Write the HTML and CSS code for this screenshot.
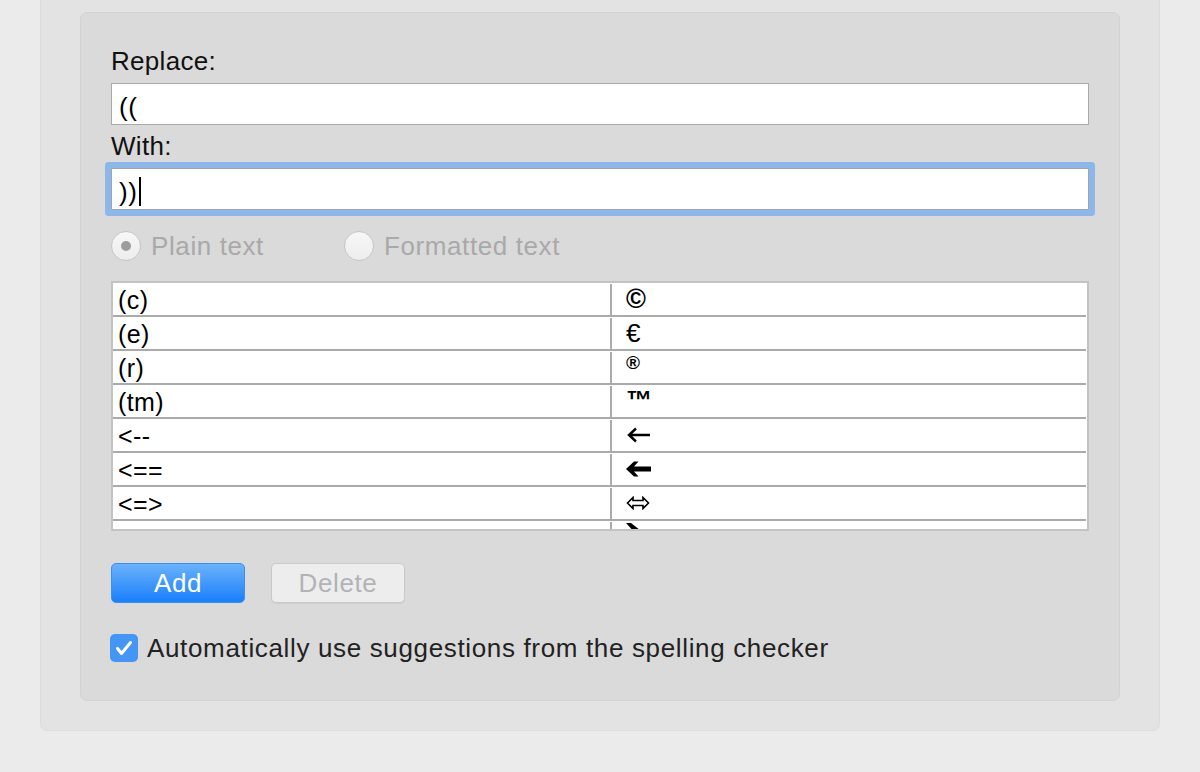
FILE: index.html
```html
<!DOCTYPE html>
<html lang="en">
<head>
<meta charset="utf-8">
<title>AutoCorrect</title>
<link rel="stylesheet" href="styles.css">
</head>
<body>
<div class="page">
  <div class="panel">
    <div class="box">
      <div class="label">Replace:</div>
      <div class="field"><span class="val">((</span></div>
      <div class="label">With:</div>
      <div class="field focused"><span class="val">))</span><span class="caret"></span></div>

      <div class="radios">
        <div class="radio-item">
          <span class="radio on"><span class="dot"></span></span>
          <span class="radio-text">Plain text</span>
        </div>
        <div class="radio-item">
          <span class="radio"></span>
          <span class="radio-text">Formatted text</span>
        </div>
      </div>

      <div class="table">
        <div class="row"><div class="c1">(c)</div><div class="c2"><span class="g-copy">©</span></div></div>
        <div class="row"><div class="c1">(e)</div><div class="c2"><span class="g-euro">€</span></div></div>
        <div class="row"><div class="c1">(r)</div><div class="c2"><span class="g-reg">®</span></div></div>
        <div class="row"><div class="c1">(tm)</div><div class="c2"><span class="g-tm">™</span></div></div>
        <div class="row"><div class="c1">&lt;--</div><div class="c2">
          <svg class="g-arrow" width="26" height="16" viewBox="0 0 26 16"><path d="M3 8H24M10 1.5L3 8L10 14.5" fill="none" stroke="#000" stroke-width="2.4"/></svg>
        </div></div>
        <div class="row"><div class="c1">&lt;==</div><div class="c2">
          <svg class="g-arrow" width="26" height="16" viewBox="0 0 26 16"><polygon points="0,8 8,0.5 12.5,0.5 8,5.5 25,5.5 25,10.5 8,10.5 12.5,15.5 8,15.5" fill="#000"/></svg>
        </div></div>
        <div class="row"><div class="c1">&lt;=&gt;</div><div class="c2">
          <svg class="g-arrow" width="26" height="14" viewBox="0 0 26 14"><polygon points="1.5,7 7,1.5 7,4.5 17,4.5 17,1.5 22.5,7 17,12.5 17,9.5 7,9.5 7,12.5" fill="none" stroke="#000" stroke-width="1.6" stroke-linejoin="miter"/></svg>
        </div></div>
        <div class="row"><div class="c1"></div><div class="c2">
          <svg class="g-arrow top" width="30" height="26" viewBox="0 0 30 26"><polygon points="8,2 13,2 27,13 13,24 8,24 18,13" fill="#000"/></svg>
        </div></div>
      </div>

      <div class="buttons">
        <div class="btn primary">Add</div>
        <div class="btn disabled">Delete</div>
      </div>

      <div class="check-row">
        <span class="checkbox">
          <svg width="28" height="28" viewBox="0 0 28 28"><polyline points="7.5,14.5 11.5,19.5 20.5,8.5" fill="none" stroke="#fff" stroke-width="3" stroke-linecap="round" stroke-linejoin="round"/></svg>
        </span>
        <span class="check-text">Automatically use suggestions from the spelling checker</span>
      </div>
    </div>
  </div>
</div>
</body>
</html>
```
FILE: styles.css
```css
html, body {
  margin: 0;
  padding: 0;
  background: #ebebeb;
}
body {
  font-family: "Liberation Sans", Arial, sans-serif;
  font-size: 26px;
  letter-spacing: 0.6px;
  color: #1e1e1e;
  width: 1200px;
  height: 772px;
  overflow: hidden;
}
.page {
  padding: 0 40px;
}
.panel {
  height: 731px;
  box-sizing: border-box;
  background: #e3e3e3;
  border-radius: 0 0 7px 7px;
  border: 1px solid #dddddd;
  border-top: none;
  padding: 12px 39px 0 39px;
}
.box {
  height: 689px;
  box-sizing: border-box;
  background: #dadada;
  border: 1px solid #d2d2d2;
  border-radius: 7px;
  padding: 33px 30px 0 30px;
}
.label {
  line-height: 30px;
  height: 30px;
  color: #111;
  letter-spacing: 0.3px;
}
.field {
  margin-top: 7px;
  margin-bottom: 6px;
  height: 42px;
  box-sizing: border-box;
  background: #fff;
  border: 1px solid #a9a9a9;
  padding: 5px 7px 0 7px;
  line-height: 30px;
  display: flex;
  align-items: center;
  color: #000;
}
.field.focused {
  box-shadow: 0 0 0 6px #8db7e8;
  border-radius: 1px;
  border-color: #9aa6b4;
}
.val {
  line-height: 30px;
}
.caret {
  display: inline-block;
  width: 2px;
  height: 29px;
  background: #000;
  margin-left: 1px;
}
.radios {
  margin-top: 20px;
  display: flex;
  height: 32px;
  align-items: center;
}
.radio-item {
  display: flex;
  align-items: center;
  width: 233px;
}
.radio {
  width: 30px;
  height: 30px;
  box-sizing: border-box;
  border-radius: 50%;
  border: 1px solid #c6c6c6;
  background: linear-gradient(#f7f7f7, #ededed);
  display: flex;
  align-items: center;
  justify-content: center;
  margin-right: 10px;
}
.dot {
  width: 10px;
  height: 10px;
  border-radius: 50%;
  background: #9c9c9c;
}
.radio-text {
  color: #a9a9a9;
}
.table {
  margin-top: 19px;
  height: 250px;
  box-sizing: border-box;
  border: 2px solid #c3c3c3;
  background: #fff;
  overflow: hidden;
}
.row {
  display: flex;
  height: 34px;
  box-sizing: border-box;
  border-bottom: 2px solid #aaaaaa;
  margin: 0 1px 0 0;
}
.c1 {
  width: 492px;
  padding-left: 5px;
  line-height: 32px;
  font-size: 25px;
  letter-spacing: 0.4px;
  color: #000;
  border-right: 2px solid #ababab;
  margin-top: 1px;
}
.c2 {
  padding-left: 14px;
  display: flex;
  align-items: center;
  color: #000;
  line-height: 32px;
}
.g-copy {
  font-size: 27px;
  font-weight: bold;
}
.g-euro {
  font-size: 26px;
}
.g-reg {
  font-size: 19px;
  font-weight: bold;
  position: relative;
  top: -4px;
}
.g-tm {
  font-size: 26px;
  font-weight: bold;
  position: relative;
  top: -1px;
}
.g-arrow {
  display: block;
}
.g-arrow.top {
  align-self: flex-start;
  margin-left: -8px;
  margin-top: 0;
}
.buttons {
  margin-top: 32px;
  display: flex;
  gap: 26px;
}
.btn {
  width: 134px;
  height: 40px;
  box-sizing: border-box;
  border-radius: 5px;
  display: flex;
  align-items: center;
  justify-content: center;
  font-size: 26px;
}
.btn.primary {
  background: linear-gradient(#6ab2fb, #1a7ffb);
  border: 1px solid #3b8ef2;
  color: #fff;
}
.btn.disabled {
  background: #ededed;
  border: 1px solid #c9c9c9;
  color: #b3b3b3;
  box-shadow: 0 1px 1px rgba(0,0,0,0.05);
}
.check-row {
  margin-top: 29px;
  display: flex;
  align-items: center;
  height: 32px;
}
.checkbox {
  width: 28px;
  height: 28px;
  border-radius: 5px;
  background: #4595f5;
  margin-left: -1px;
  margin-right: 9px;
  display: flex;
}
.check-text {
  color: #222;
  letter-spacing: 0.65px;
}
```
